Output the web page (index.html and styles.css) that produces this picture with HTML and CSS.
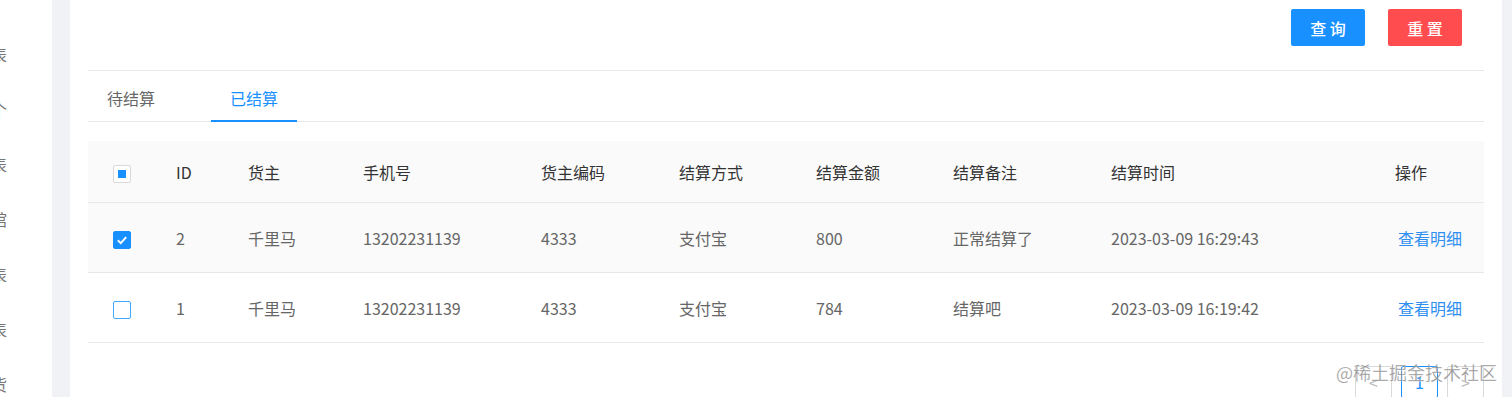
FILE: index.html
```html
<!doctype html>
<html lang="zh-CN">
<head>
    <meta charset="UTF-8">
    <title>结算管理</title>
    <link rel="stylesheet" href="styles.css">
</head>
<body>

    <div class="side">
        <ul class="menu">
            <li>统计报表</li>
            <li>货主个</li>
            <li>财务报表</li>
            <li>场馆</li>
            <li>订单报表</li>
            <li>物流报表</li>
            <li>货</li>
        </ul>
    </div>

    <div class="main">

        <div class="toolbar">
            <button class="btn btn-primary">查 询</button>
            <button class="btn btn-danger">重 置</button>
        </div>

        <div class="tabs">
            <div class="tab">待结算</div>
            <div class="tab active">已结算</div>
        </div>

        <table class="grid">
            <colgroup>
                <col style="width:68px">
                <col style="width:72px">
                <col style="width:115px">
                <col style="width:178px">
                <col style="width:138px">
                <col style="width:137px">
                <col style="width:137px">
                <col style="width:158px">
                <col style="width:284px">
                <col style="width:109px">
            </colgroup>
            <thead>
                <tr>
                    <th class="check-cell"><span class="check half"></span></th>
                    <th>ID</th>
                    <th>货主</th>
                    <th>手机号</th>
                    <th>货主编码</th>
                    <th>结算方式</th>
                    <th>结算金额</th>
                    <th>结算备注</th>
                    <th>结算时间</th>
                    <th>操作</th>
                </tr>
            </thead>
            <tbody>
                <tr class="hover">
                    <td class="check-cell">
                        <span class="check on">
                            <svg width="14" height="14" viewBox="0 0 14 14"><path d="M2.8 7.2l3 2.9 5.4-6" fill="none" stroke="#fff" stroke-width="2"/></svg>
                        </span>
                    </td>
                    <td>2</td>
                    <td>千里马</td>
                    <td>13202231139</td>
                    <td>4333</td>
                    <td>支付宝</td>
                    <td>800</td>
                    <td>正常结算了</td>
                    <td>2023-03-09 16:29:43</td>
                    <td><a class="link" href="#">查看明细</a></td>
                </tr>
                <tr>
                    <td class="check-cell"><span class="check focus"></span></td>
                    <td>1</td>
                    <td>千里马</td>
                    <td>13202231139</td>
                    <td>4333</td>
                    <td>支付宝</td>
                    <td>784</td>
                    <td>结算吧</td>
                    <td>2023-03-09 16:19:42</td>
                    <td><a class="link" href="#">查看明细</a></td>
                </tr>
            </tbody>
        </table>

        <div class="pager">
            <span class="page">&lt;</span>
            <span class="page current">1</span>
            <span class="page">&gt;</span>
        </div>

        <div class="mark">@稀土掘金技术社区</div>
    </div>

</body>
</html>
```

FILE: styles.css
```css
html, body{
    margin:0;
    padding:0;
    height:100%;
    overflow:hidden;
}
body{
    display:flex;
    background:#f0f2f5;
    font-family:"Noto Sans CJK SC", "Noto Sans", sans-serif;
    font-size:16px;
    color:#666;
}

/* 侧栏（被挤出屏幕，只露出一点） */
.side{
    width:52px;
    flex-shrink:0;
    background:#fff;
    overflow:hidden;
}
.menu{
    list-style:none;
    margin:0 0 0 -100px;
    padding:27px 0 0;
    width:107px;
    text-align:right;
}
.menu li{
    height:55px;
    line-height:55px;
    color:#777;
    white-space:nowrap;
    margin-top:-27px;
    margin-bottom:27px;
}
.menu li:first-child{
    margin-top:0;
}

.main{
    position:relative;
    flex:1;
    margin:0 10px 0 18px;
    padding:0 18px;
    background:#fff;
}

.toolbar{
    display:flex;
    justify-content:flex-end;
    gap:23px;
    height:71px;
    padding:9px 22px 0 0;
    box-sizing:border-box;
    border-bottom:1px solid #e8e8e8;
}
.btn{
    width:74px;
    height:37px;
    border:0;
    border-radius:2px;
    color:#fff;
    font-family:inherit;
    font-size:16px;
    font-weight:500;
    padding:0;
}
.btn-primary{
    background:#1890ff;
}
.btn-danger{
    background:#ff4d4f;
}

.tabs{
    display:flex;
    gap:37px;
    border-bottom:1px solid #e8e8e8;
}
.tab{
    padding:15px 19px 10px;
    line-height:24px;
    color:#666;
    margin-bottom:-1px;
    border-bottom:2px solid transparent;
}
.tab.active{
    color:#1890ff;
    border-bottom-color:#1890ff;
}

.grid{
    width:1396px;
    margin-top:19px;
    border-collapse:collapse;
    table-layout:fixed;
}
.grid th, .grid td{
    text-align:left;
    padding:0 0 0 20px;
    border-bottom:1px solid #e8e8e8;
    white-space:nowrap;
}
.grid th{
    height:61px;
    background:#fafafa;
    font-weight:normal;
    color:#333;
}
.grid td{
    height:69px;
    color:#666;
}
.grid tr.hover td{
    background:#fafafa;
}
.grid .check-cell{
    padding:0;
    text-align:center;
}

.check{
    display:inline-flex;
    align-items:center;
    justify-content:center;
    box-sizing:border-box;
    width:18px;
    height:18px;
    border:1px solid #d9d9d9;
    border-radius:2px;
    background:#fff;
    vertical-align:middle;
}
.check.half::after{
    content:"";
    width:8px;
    height:8px;
    background:#1890ff;
}
.check.on{
    background:#1890ff;
    border-color:#1890ff;
}
.check.focus{
    border-color:#40a9ff;
}

.link{
    color:#2f8ff0;
    text-decoration:none;
    padding-left:3px;
}

.pager{
    display:flex;
    justify-content:flex-end;
    gap:9px;
    margin-top:23px;
}
.page{
    width:37px;
    height:32px;
    box-sizing:border-box;
    border:1px solid #d9d9d9;
    border-radius:2px;
    text-align:center;
    line-height:30px;
    color:#bbb;
}
.page.current{
    border-color:#1890ff;
    color:#1890ff;
}

.mark{
    position:absolute;
    right:5px;
    top:360px;
    font-size:18px;
    line-height:24px;
    color:rgba(120,120,120,.75);
    -webkit-text-stroke:0.3px rgba(255,255,255,.6);
}
```
